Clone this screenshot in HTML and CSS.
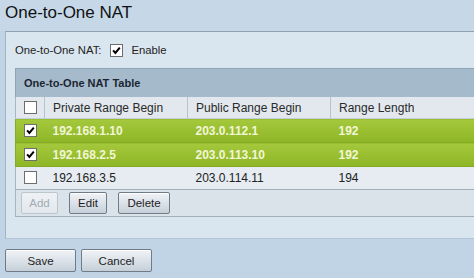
FILE: index.html
```html
<!DOCTYPE html>
<html>
<head>
<meta charset="utf-8">
<link rel="stylesheet" href="styles.css">
</head>
<body>
<div class="title">One-to-One NAT</div>
<div class="panel">
  <div class="enable-row">
    <span class="label">One-to-One NAT:</span>
    <span class="cb checked"><svg viewBox="0 0 12 12"><path d="M2.3 5.8 L4.8 8.6 L9.6 2.8"/></svg></span>
    <span class="label">Enable</span>
  </div>
  <table class="nat">
    <tr class="caption"><td colspan="4">One-to-One NAT Table</td></tr>
    <tr class="head">
      <td class="c0"><span class="cb"></span></td>
      <td class="c1">Private Range Begin</td>
      <td class="c2">Public Range Begin</td>
      <td class="c3">Range Length</td>
    </tr>
    <tr class="sel first">
      <td class="c0"><span class="cb checked"><svg viewBox="0 0 12 12"><path d="M2.3 5.8 L4.8 8.6 L9.6 2.8"/></svg></span></td>
      <td>192.168.1.10</td>
      <td>203.0.112.1</td>
      <td>192</td>
    </tr>
    <tr class="sel">
      <td class="c0"><span class="cb checked"><svg viewBox="0 0 12 12"><path d="M2.3 5.8 L4.8 8.6 L9.6 2.8"/></svg></span></td>
      <td>192.168.2.5</td>
      <td>203.0.113.10</td>
      <td>192</td>
    </tr>
    <tr class="plain">
      <td class="c0"><span class="cb"></span></td>
      <td>192.168.3.5</td>
      <td>203.0.114.11</td>
      <td>194</td>
    </tr>
    <tr class="actions">
      <td colspan="4">
        <div class="btns">
          <button class="btn add" disabled>Add</button>
          <button class="btn edit">Edit</button>
          <button class="btn del">Delete</button>
        </div>
      </td>
    </tr>
  </table>
</div>
<div class="footer">
  <button class="btn big">Save</button>
  <button class="btn big">Cancel</button>
</div>
</body>
</html>
```
FILE: styles.css
```css
html, body {
  margin: 0;
  padding: 0;
}
body {
  width: 474px;
  height: 278px;
  overflow: hidden;
  background: #c1d4e5;
  font-family: "Liberation Sans", Arial, sans-serif;
  color: #1c1c1c;
}
.title {
  height: 31px;
  padding-left: 5px;
  font-size: 17px;
  line-height: 25px;
  color: #111;
  background: #c6d8e8;
}
.panel {
  margin-left: 5px;
  height: 206px;
  border-top: 1px solid #8ca1b4;
  border-left: 1px solid #a3b4c4;
  border-bottom: 1px solid #b3c5d5;
  background: #dae6ef;
  padding-left: 9px;
  box-sizing: content-box;
}
.enable-row {
  display: flex;
  align-items: center;
  height: 12px;
  padding-top: 12px;
  margin-bottom: 12px;
  gap: 8px;
}
.label {
  font-size: 11.3px;
  color: #222;
}
.enable-row .label:first-child {
  margin-right: 1px;
}
.cb {
  display: inline-block;
  width: 11px;
  height: 11px;
  background: #fff;
  border: 1px solid #6d6d6d;
  box-sizing: content-box;
  vertical-align: middle;
}
.cb svg {
  display: block;
  width: 11px;
  height: 11px;
}
.cb svg path {
  fill: none;
  stroke: #000;
  stroke-width: 2.2;
}
.nat {
  border-collapse: collapse;
  width: 460px;
  font-size: 12px;
}
.nat td {
  padding: 0 0 0 8px;
  white-space: nowrap;
}
.caption td {
  height: 28px;
  background: #a5bacb;
  border-top: 1px solid #8fa4b6;
  border-left: 1px solid #8fa4b6;
  font-weight: bold;
  font-size: 11px;
  color: #1b2632;
}
.head td {
  height: 21px;
  background: #e2e8ee;
  border-bottom: 1px solid #c4ced8;
  border-left: 1px solid #b6c2ce;
  color: #2a2a2a;
}
.nat td.c0 {
  width: 28px;
  padding: 0;
  text-align: center;
  border-left: 1px solid #a8b6c4;
}
.nat .c0 .cb {
  margin-left: 0;
  position: relative;
  top: -1px;
}
.c1, .c2 {
  width: 134px;
}
.sel td {
  height: 23px;
  background: linear-gradient(#a5c83c, #8db627);
  border-bottom: 1px solid #86aa26;
  font-weight: bold;
  color: #f2f6d6;
}
.sel td.c0 {
  border-left: 1px solid #86aa26;
}
.plain td {
  height: 22px;
  background: #e6ecf2;
  border-bottom: 1px solid #a3afbb;
  color: #222;
}
.actions td {
  height: 26px;
  background: #dbe3ea;
  border-left: 1px solid #a8b6c4;
  border-bottom: 1px solid #a3afbb;
  padding-left: 5px;
}
.btns {
  display: flex;
  gap: 11px;
}
.btn {
  font-family: "Liberation Sans", Arial, sans-serif;
  font-size: 11.5px;
  color: #1e1e1e;
  height: 22px;
  padding: 0;
  border: 1px solid #6e7c8a;
  border-radius: 2px;
  background: linear-gradient(#f0f3f6, #d9e0e7 55%, #c6cfd8);
  box-shadow: inset 0 1px 0 #fff;
}
.btn.add {
  width: 37px;
  color: #a3acb4;
  border-color: #bcc6cf;
  background: linear-gradient(#eef2f5, #e2e8ed);
  box-shadow: none;
}
.btn.edit {
  width: 38px;
}
.btn.del {
  width: 52px;
}
.footer {
  display: flex;
  gap: 5px;
  padding: 10px 0 0 5px;
}
.btn.big {
  width: 71px;
  height: 23px;
}
```
